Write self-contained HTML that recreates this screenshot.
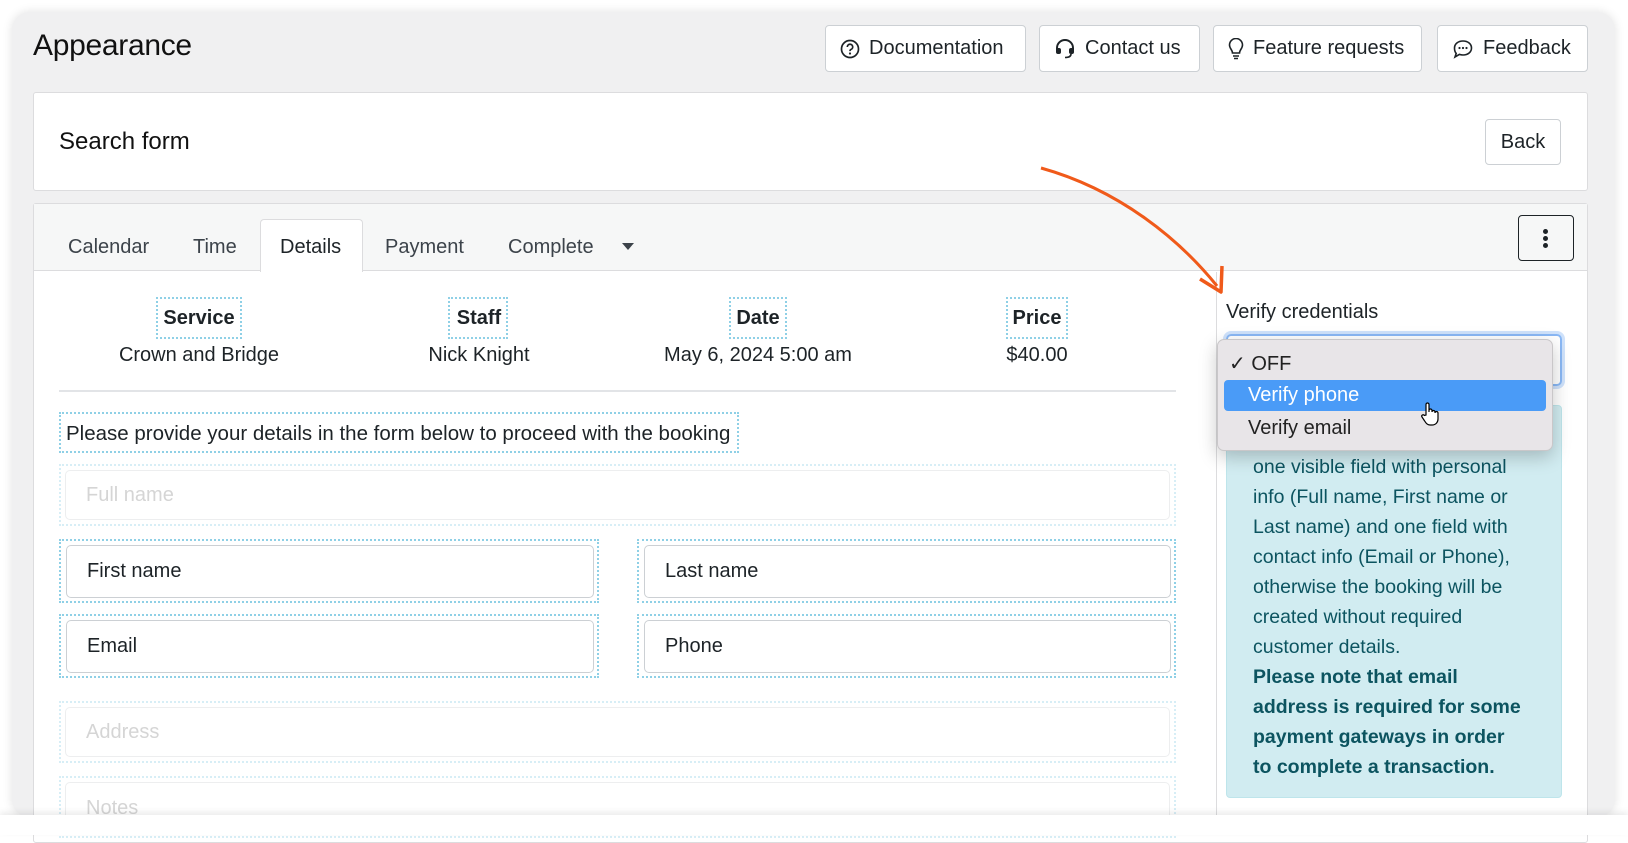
<!DOCTYPE html>
<html><head><meta charset="utf-8"><style>
*{box-sizing:border-box;margin:0;padding:0}
body{width:1628px;height:828px;background:#fff;font-family:"Liberation Sans",sans-serif;color:#1d2327;position:relative;overflow:hidden}
.abs{position:absolute}
.panel{left:12px;top:12px;width:1603px;height:805px;background:#f0f0f1;border-radius:18px;box-shadow:0 0 10px rgba(0,0,0,.12)}
.btn{position:absolute;top:25px;height:47px;background:#fff;border:1px solid #ccd0d4;border-radius:4px;font-size:20px;display:flex;align-items:center;gap:9px;padding-left:14px;color:#1d2327}
.card{position:absolute;background:#fff;border:1px solid #dcdcde;border-radius:3px}
.tab{position:absolute;top:236px;font-size:20px;color:#3c434a}
.lbl{position:absolute;font-size:20px;text-align:center;width:240px}
.dot{position:absolute;border:2px dotted #8fd0e6}
.inp{position:absolute;border:1px solid #ccd0d4;border-radius:5px;background:#fff;font-size:20px;padding-left:20px;display:flex;align-items:center}
.faint{opacity:.35}
.al{position:absolute;left:1253px;font-size:19.5px;color:#0c5460;line-height:30px}
</style></head><body>
<div class="abs panel"></div>
<div class="abs" style="left:33px;top:29px;font-size:30px;color:#111;letter-spacing:-0.3px">Appearance</div>

<div class="btn" style="left:825px;width:201px"><svg width="20" height="20" viewBox="0 0 20 20"><circle cx="10" cy="10" r="8.5" fill="none" stroke="#1d2327" stroke-width="1.7"/><path d="M7.3 8a2.7 2.7 0 1 1 3.6 2.5c-.7.3-.9.8-.9 1.6" fill="none" stroke="#1d2327" stroke-width="1.7"/><circle cx="10" cy="14.5" r="1.1" fill="#1d2327"/></svg>Documentation</div>
<div class="btn" style="left:1039px;width:161px"><svg width="22" height="20" viewBox="0 0 22 20"><path d="M3 11V9a8 8 0 0 1 16 0v2" fill="none" stroke="#1d2327" stroke-width="2"/><rect x="2" y="9" width="5" height="6" rx="2" fill="#1d2327"/><rect x="15" y="9" width="5" height="6" rx="2" fill="#1d2327"/><path d="M17 15c0 3-3 3.5-6 3.5" fill="none" stroke="#1d2327" stroke-width="1.6"/></svg>Contact us</div>
<div class="btn" style="left:1213px;width:209px"><svg width="16" height="22" viewBox="0 0 16 22"><path d="M4.5 15c0-3-3-4.5-3-8a6.5 6.5 0 0 1 13 0c0 3.5-3 5-3 8z" fill="none" stroke="#1d2327" stroke-width="1.6"/><path d="M5 18h6M6 20.5h4" stroke="#1d2327" stroke-width="1.6"/></svg>Feature requests</div>
<div class="btn" style="left:1437px;width:151px"><svg width="22" height="20" viewBox="0 0 22 20"><path d="M11 2c5 0 8.5 3 8.5 7s-3.5 7-8.5 7c-1.3 0-2.5-.2-3.6-.6L3 18l1.2-3.6C2.9 13 2.5 11.2 2.5 9 2.5 5 6 2 11 2z" fill="none" stroke="#1d2327" stroke-width="1.6"/><circle cx="7.5" cy="9" r="1.1" fill="#1d2327"/><circle cx="11" cy="9" r="1.1" fill="#1d2327"/><circle cx="14.5" cy="9" r="1.1" fill="#1d2327"/></svg>Feedback</div>

<div class="card" style="left:33px;top:92px;width:1555px;height:99px"></div>
<div class="abs" style="left:59px;top:128px;font-size:24px;color:#111">Search form</div>
<div class="abs" style="left:1485px;top:119px;width:76px;height:46px;border:1px solid #ccd0d4;border-radius:4px;font-size:20px;display:flex;align-items:center;justify-content:center">Back</div>

<div class="card" style="left:33px;top:203px;width:1555px;height:640px"></div>
<div class="abs" style="left:34px;top:204px;width:1553px;height:67px;background:#f6f7f7;border-bottom:1px solid #dcdcde"></div>
<div class="abs" style="left:260px;top:219px;width:103px;height:53px;background:#fff;border:1px solid #dcdcde;border-bottom:none;border-radius:4px 4px 0 0"></div>
<div class="tab" style="left:68px">Calendar</div>
<div class="tab" style="left:193px">Time</div>
<div class="tab" style="left:280px;color:#1d2327">Details</div>
<div class="tab" style="left:385px">Payment</div>
<div class="tab" style="left:508px">Complete</div>
<div class="abs" style="left:622px;top:243px;border-left:6px solid transparent;border-right:6px solid transparent;border-top:7px solid #3c434a"></div>
<div class="abs" style="left:1518px;top:215px;width:56px;height:46px;border:1.5px solid #1d2327;border-radius:4px"></div>
<div class="abs" style="left:1543px;top:229px;width:5px;height:5px;border-radius:50%;background:#1d2327;box-shadow:0 7px 0 #1d2327,0 14px 0 #1d2327"></div>

<div class="dot" style="left:156px;top:297px;width:86px;height:42px"></div>
<div class="dot" style="left:448px;top:297px;width:60px;height:42px"></div>
<div class="dot" style="left:729px;top:297px;width:58px;height:42px"></div>
<div class="dot" style="left:1006px;top:297px;width:62px;height:42px"></div>
<div class="lbl" style="left:79px;top:307px;font-weight:bold">Service</div>
<div class="lbl" style="left:359px;top:307px;font-weight:bold">Staff</div>
<div class="lbl" style="left:638px;top:307px;font-weight:bold">Date</div>
<div class="lbl" style="left:917px;top:307px;font-weight:bold">Price</div>
<div class="lbl" style="left:79px;top:344px">Crown and Bridge</div>
<div class="lbl" style="left:359px;top:344px">Nick Knight</div>
<div class="lbl" style="left:638px;top:344px">May 6, 2024 5:00 am</div>
<div class="lbl" style="left:917px;top:344px">$40.00</div>
<div class="abs" style="left:59px;top:390px;width:1117px;height:2px;background:#e2e4e7"></div>

<div class="dot" style="left:59px;top:412px;width:680px;height:41px"></div>
<div class="abs" style="left:66px;top:422px;font-size:20.5px">Please provide your details in the form below to proceed with the booking</div>

<div class="faint"><div class="dot" style="left:59px;top:464px;width:1117px;height:62px"></div>
<div class="inp" style="left:65px;top:470px;width:1105px;height:50px;color:#888">Full name</div></div>
<div class="dot" style="left:59px;top:539px;width:540px;height:64px"></div>
<div class="inp" style="left:66px;top:545px;width:528px;height:53px">First name</div>
<div class="dot" style="left:637px;top:539px;width:539px;height:64px"></div>
<div class="inp" style="left:644px;top:545px;width:527px;height:53px">Last name</div>
<div class="dot" style="left:59px;top:614px;width:540px;height:64px"></div>
<div class="inp" style="left:66px;top:620px;width:528px;height:53px">Email</div>
<div class="dot" style="left:637px;top:614px;width:539px;height:64px"></div>
<div class="inp" style="left:644px;top:620px;width:527px;height:53px">Phone</div>
<div class="faint"><div class="dot" style="left:59px;top:701px;width:1117px;height:62px"></div>
<div class="inp" style="left:65px;top:707px;width:1105px;height:50px;color:#888">Address</div>
<div class="dot" style="left:59px;top:776px;width:1117px;height:62px"></div>
<div class="inp" style="left:65px;top:782px;width:1105px;height:50px;color:#888;align-items:flex-start;padding-top:14px">Notes</div></div>

<div class="abs" style="left:1216px;top:272px;width:1px;height:545px;background:#dcdcde"></div>
<div class="abs" style="left:1226px;top:301px;font-size:20px">Verify credentials</div>
<div class="abs" style="left:1226px;top:334px;width:336px;height:52px;border:2px solid #8ab8f5;border-radius:5px;box-shadow:0 0 0 3px #cfe2fb"></div>

<div class="abs" style="left:1226px;top:405px;width:336px;height:393px;background:#d1ecf1;border:1px solid #bee5eb;border-radius:4px"></div>
<div class="al" style="top:452px">one visible field with personal</div>
<div class="al" style="top:482px">info (Full name, First name or</div>
<div class="al" style="top:512px">Last name) and one field with</div>
<div class="al" style="top:542px">contact info (Email or Phone),</div>
<div class="al" style="top:572px">otherwise the booking will be</div>
<div class="al" style="top:602px">created without required</div>
<div class="al" style="top:632px">customer details.</div>
<div class="al" style="top:662px;font-weight:bold">Please note that email</div>
<div class="al" style="top:692px;font-weight:bold">address is required for some</div>
<div class="al" style="top:722px;font-weight:bold">payment gateways in order</div>
<div class="al" style="top:752px;font-weight:bold">to complete a transaction.</div>

<div class="abs" style="left:1217px;top:339px;width:336px;height:112px;background:#e8e5e8;border:1px solid #c9c7c9;border-radius:7px;box-shadow:0 6px 18px rgba(0,0,0,.22)"></div>
<div class="abs" style="left:1229px;top:351px;font-size:20px;color:#222">✓ OFF</div>
<div class="abs" style="left:1224px;top:380px;width:322px;height:31px;background:#4a9bf7;border-radius:4px"></div>
<div class="abs" style="left:1248px;top:384px;font-size:20px;color:#fff">Verify phone</div>
<div class="abs" style="left:1248px;top:417px;font-size:20px;color:#222">Verify email</div>
<svg class="abs" style="left:1420px;top:401px" width="22" height="26" viewBox="0 0 22 26"><path d="M6 14V3.5a1.5 1.5 0 0 1 3 0V11V9.5a1.5 1.5 0 0 1 3 0V11a1.5 1.5 0 0 1 3 0v1a1.5 1.5 0 0 1 3 0v6c0 3-2 6-6 6h-2c-3 0-4-2-6-5l-2-3a1.4 1.4 0 0 1 2.3-1.6z" fill="#fff" stroke="#000" stroke-width="1.2"/></svg>

<svg class="abs" style="left:0;top:0" width="1628" height="828"><path d="M1041 168C1120 190 1180 240 1217 286" fill="none" stroke="#f05a1a" stroke-width="3"/><path d="M1200 279L1221 292L1222 266" fill="none" stroke="#f05a1a" stroke-width="3.5" stroke-linejoin="round"/></svg>
<div class="abs" style="left:0;top:815px;width:1628px;height:20px;background:#fff;box-shadow:0 -3px 6px rgba(0,0,0,.08)"></div>
</body></html>
